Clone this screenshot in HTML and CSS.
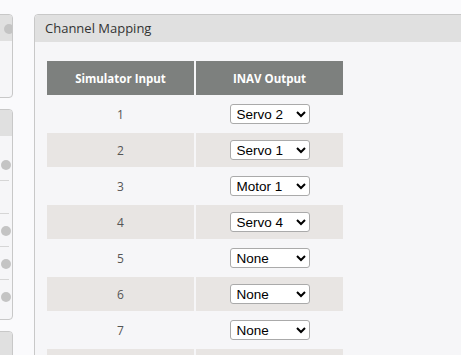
FILE: index.html
```html
<!DOCTYPE html>
<html lang="en">

<head>
    <meta charset="UTF-8" />
    <title>Simulator</title>
    <link rel="stylesheet" href="styles.css">
</head>

<body>
    <div class="layout">
        <!-- 左侧设置栏 -->
        <aside class="sidebar">
            <div class="side-box small">
                <div class="side-head"><span class="dot"></span></div>
                <div class="side-body"></div>
            </div>
            <div class="side-box">
                <div class="side-head"></div>
                <div class="side-body">
                    <div class="side-row"><span class="dot"></span></div>
                    <div class="side-row"></div>
                    <div class="side-row"><span class="dot"></span></div>
                    <div class="side-row"><span class="dot"></span></div>
                    <div class="side-row last"><span class="dot"></span></div>
                </div>
            </div>
            <div class="side-box">
                <div class="side-head"></div>
            </div>
        </aside>

        <!-- 通道映射 -->
        <section class="gui-box">
            <div class="gui-head">Channel Mapping</div>
            <div class="gui-body">
                <table class="mapping">
                    <thead>
                        <tr>
                            <th>Simulator Input</th>
                            <th>INAV Output</th>
                        </tr>
                    </thead>
                    <tbody>
                        <tr>
                            <td>1</td>
                            <td><select><option>Servo 2</option></select></td>
                        </tr>
                        <tr>
                            <td>2</td>
                            <td><select><option>Servo 1</option></select></td>
                        </tr>
                        <tr>
                            <td>3</td>
                            <td><select><option>Motor 1</option></select></td>
                        </tr>
                        <tr>
                            <td>4</td>
                            <td><select><option>Servo 4</option></select></td>
                        </tr>
                        <tr>
                            <td>5</td>
                            <td><select><option>None</option></select></td>
                        </tr>
                        <tr>
                            <td>6</td>
                            <td><select><option>None</option></select></td>
                        </tr>
                        <tr>
                            <td>7</td>
                            <td><select><option>None</option></select></td>
                        </tr>
                        <tr>
                            <td></td>
                            <td></td>
                        </tr>
                    </tbody>
                </table>
            </div>
        </section>
    </div>
</body>

</html>
```

FILE: styles.css
```css
html {
    overflow: hidden;
}

body {
    margin: 0;
    padding: 14px 0 0;
    background-color: #fafafc;
    font-family: "Open Sans", "Liberation Sans", sans-serif;
    color: #333;
}

.layout {
    display: flex;
    align-items: flex-start;
}

/* 左侧栏，只露出右边一小截 */
.sidebar {
    flex: none;
    width: 200px;
    margin-left: -187px;
}

.side-box {
    border: 1px solid #c8c8c8;
    border-radius: 4px;
    background-color: #f6f6f8;
    margin-bottom: 11px;
    overflow: hidden;
}

.side-box.small {
    height: 82px;
}

.side-head {
    position: relative;
    height: 26px;
    background-color: #e0e0e0;
}

.side-body {
    padding: 12px 3px 7px 0;
}

.side-row {
    position: relative;
    height: 32px;
    border-bottom: 1px solid #d6d6d6;
}

.side-row.last {
    border-bottom: none;
}

.dot {
    position: absolute;
    right: -2px;
    top: 50%;
    width: 10px;
    height: 10px;
    margin-top: -4px;
    border-radius: 50%;
    background-color: #c4c4c4;
}

/* 主面板 */
.gui-box {
    flex: none;
    width: 520px;
    margin-left: 21px;
    border: 1px solid #c8c8c8;
    border-radius: 4px;
    background-color: #f6f6f8;
}

.gui-head {
    height: 27px;
    line-height: 27px;
    padding-left: 10px;
    background-color: #e0e0e0;
    font-size: 13px;
    color: #333;
    border-radius: 4px 4px 0 0;
}

.gui-body {
    padding: 17px 10px 0;
}

.mapping {
    border-spacing: 2px;
    width: 300px;
}

.mapping th {
    height: 34px;
    padding: 0;
    background-color: #7d807e;
    color: #fff;
    font-size: 11.5px;
    font-weight: 700;
}

.mapping td {
    height: 34px;
    padding: 0;
    text-align: center;
    font-size: 12px;
    color: #555;
}

.mapping th,
.mapping td {
    width: 147px;
}

.mapping tbody tr:nth-child(even) td {
    background-color: #e8e5e3;
}

.mapping select {
    width: 80px;
    height: 20px;
    padding: 0 0 0 2px;
    border: 1px solid #aaa;
    border-radius: 3px;
    background-color: #fff;
    font-family: "Liberation Sans", Arial, sans-serif;
    font-size: 13.5px;
    color: #000;
}
```
